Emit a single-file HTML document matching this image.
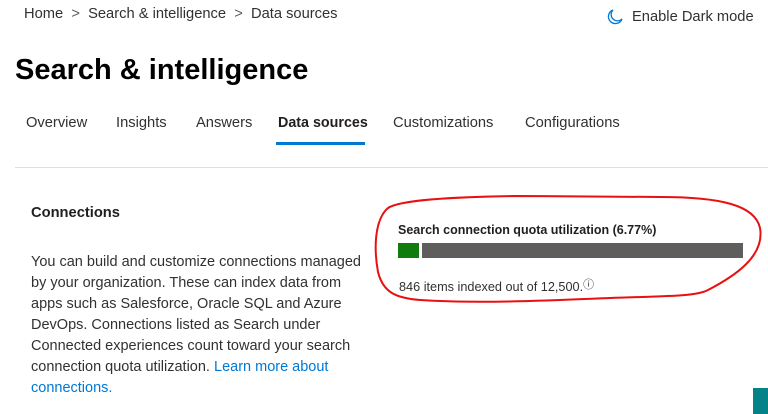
<!DOCTYPE html>
<html><head><style>
body{margin:0;width:768px;height:414px;overflow:hidden;background:#fff;font-family:"Liberation Sans",sans-serif;color:#323130;position:relative}
.a{position:absolute;white-space:nowrap}
</style></head><body>
<div class="a" style="left:24px;top:6px;font-size:14.7px;color:#323130">Home &nbsp;<span style="color:#605e5c">&gt;</span>&nbsp; Search &amp; intelligence &nbsp;<span style="color:#605e5c">&gt;</span>&nbsp; Data sources</div>
<svg class="a" style="left:606px;top:8px" width="18" height="18" viewBox="0 0 18 18"><path d="M7 2 A7 7 0 1 0 16 11 A6 6 0 0 1 7 2 Z" fill="none" stroke="#0078d4" stroke-width="1.3"/></svg>
<div class="a" style="left:632px;top:9px;font-size:14.7px;color:#323130">Enable Dark mode</div>
<div class="a" style="left:15px;top:54px;font-size:29px;font-weight:bold;color:#000">Search &amp; intelligence</div>
<div class="a" style="left:26px;top:115px;font-size:14.7px;color:#323130">Overview</div>
<div class="a" style="left:116px;top:115px;font-size:14.7px;color:#323130">Insights</div>
<div class="a" style="left:196px;top:115px;font-size:14.7px;color:#323130">Answers</div>
<div class="a" style="left:278px;top:115px;font-size:14.3px;color:#201f1e;font-weight:600">Data sources</div>
<div class="a" style="left:393px;top:115px;font-size:14.7px;color:#323130">Customizations</div>
<div class="a" style="left:525px;top:115px;font-size:14.7px;color:#323130">Configurations</div>
<div class="a" style="left:276px;top:142px;width:89px;height:3px;background:#0078d4"></div>
<div class="a" style="left:15px;top:167px;width:753px;height:1px;background:#e1dfdd"></div>
<div class="a" style="left:31px;top:205px;font-size:14.7px;font-weight:bold;color:#201f1e">Connections</div>
<div class="a" style="left:31px;top:252px;font-size:14.5px;line-height:21px;color:#323130">You can build and customize connections managed<br>by your organization. These can index data from<br>apps such as Salesforce, Oracle SQL and Azure<br>DevOps. Connections listed as Search under<br>Connected experiences count toward your search<br>connection quota utilization. <span style="color:#0078d4">Learn more about</span><br><span style="color:#0078d4">connections.</span></div>
<div class="a" style="left:398px;top:223px;font-size:12.5px;font-weight:bold;color:#201f1e">Search connection quota utilization (6.77%)</div>
<div class="a" style="left:398px;top:243px;width:21px;height:15px;background:#107c10"></div>
<div class="a" style="left:422px;top:243px;width:321px;height:15px;background:#605e5c"></div>
<div class="a" style="left:399px;top:276px;font-size:12.7px;color:#323130">846 items indexed out of 12,500.<span style="font-size:11px;vertical-align:3px">ⓘ</span></div>
<svg class="a" style="left:0;top:0" width="768" height="414"><path d="M515 196 C450 197 400 200 388 208 C374 220 374 250 378 272 C383 292 395 298 420 300 C480 304 560 300 610 298 C660 296 695 297 708 290 C735 276 765 256 760 228 C755 205 720 197 660 197 C600 197 560 196 515 196 Z" fill="none" stroke="#e81010" stroke-width="2"/></svg>
<div class="a" style="left:753px;top:388px;width:15px;height:26px;background:#038387"></div>
</body></html>
